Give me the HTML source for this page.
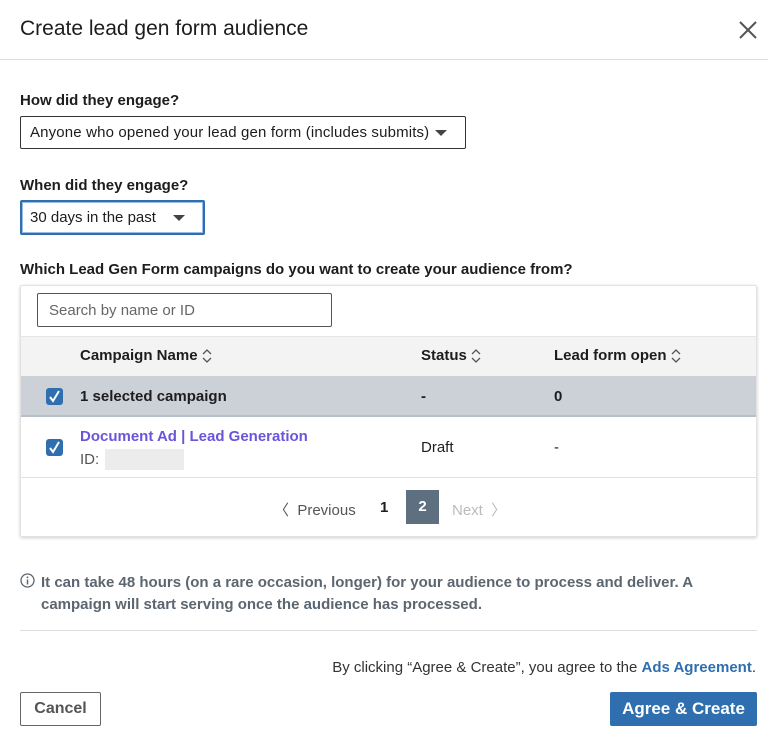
<!DOCTYPE html>
<html><head><meta charset="utf-8"><style>
*{margin:0;padding:0;box-sizing:border-box}
body{width:768px;height:735px;background:#fff;font-family:"Liberation Sans",sans-serif;color:#1d1d1d;position:relative;overflow:hidden;font-size:15px}
.a{position:absolute;white-space:nowrap}
.b{font-weight:bold}
.sel{position:absolute;border:1px solid #333;border-radius:2px;padding-left:9px;display:flex;align-items:center}
.tri{width:0;height:0;border-left:6px solid transparent;border-right:6px solid transparent;border-top:6px solid #444;position:absolute}
.cb{position:absolute;width:17px;height:17px;background:#2f6fb0;border-radius:3px}
.cb svg{position:absolute;left:2px;top:2px}
.sort{display:inline-block;vertical-align:middle;margin-left:4px}
</style></head><body>
<div class="a" style="left:20px;top:17px;font-size:21px">Create lead gen form audience</div>
<svg class="a" style="left:739px;top:21px" width="18" height="18"><path d="M1 1L17 17M17 1L1 17" stroke="#555" stroke-width="2"/></svg>
<div class="a" style="left:0;top:59px;width:768px;height:1px;background:#ddd"></div>

<div class="a b" style="left:20px;top:92px">How did they engage?</div>
<div class="sel" style="left:20px;top:116px;width:446px;height:33px;letter-spacing:0.15px">Anyone who opened your lead gen form (includes submits)<div class="tri" style="left:414px;top:13px"></div></div>

<div class="a b" style="left:20px;top:177px">When did they engage?</div>
<div class="sel" style="left:20px;top:200px;width:185px;height:35px;border:2px solid #2f6fb0;box-shadow:0 0 0 1px #9bbbe0 inset;padding-left:8px">30 days in the past<div class="tri" style="left:151px;top:13px"></div></div>

<div class="a b" style="left:20px;top:261px">Which Lead Gen Form campaigns do you want to create your audience from?</div>

<div class="a" style="left:20px;top:285px;width:737px;height:252px;border:1px solid #e2e2e2;box-shadow:0 1px 3px rgba(0,0,0,.2);border-radius:2px;overflow:hidden">
 <div class="a" style="left:16px;top:7px;width:295px;height:34px;border:1px solid #555;border-radius:2px;padding:8px 11px;color:#666">Search by name or ID</div>
 <div class="a" style="left:0;top:50px;width:737px;height:40px;background:#f3f3f4;border-top:1px solid #e6e6e6"></div>
 <div class="a b" style="left:59px;top:61px">Campaign Name<svg class="sort" width="10" height="14"><path d="M1 5L5 1L9 5M1 9L5 13L9 9" stroke="#555" fill="none" stroke-width="1.3"/></svg></div>
 <div class="a b" style="left:400px;top:61px">Status<svg class="sort" width="10" height="14"><path d="M1 5L5 1L9 5M1 9L5 13L9 9" stroke="#555" fill="none" stroke-width="1.3"/></svg></div>
 <div class="a b" style="left:533px;top:61px">Lead form open<svg class="sort" width="10" height="14"><path d="M1 5L5 1L9 5M1 9L5 13L9 9" stroke="#555" fill="none" stroke-width="1.3"/></svg></div>
 <div class="a" style="left:0;top:90px;width:737px;height:41px;background:#ccd1d8;border-bottom:2px solid #b8bfc7"></div>
 <div class="cb" style="left:25px;top:102px"><svg width="13" height="13"><path d="M2 7L5 11L11 1" stroke="#fff" stroke-width="2" fill="none"/></svg></div>
 <div class="a b" style="left:59px;top:102px">1 selected campaign</div>
 <div class="a b" style="left:400px;top:102px">-</div>
 <div class="a b" style="left:533px;top:102px">0</div>
 <div class="cb" style="left:25px;top:153px"><svg width="13" height="13"><path d="M2 7L5 11L11 1" stroke="#fff" stroke-width="2" fill="none"/></svg></div>
 <div class="a b" style="left:59px;top:142px;color:#6a55d9">Document Ad | Lead Generation</div>
 <div class="a" style="left:59px;top:165px;color:#555">ID:</div>
 <div class="a" style="left:84px;top:163px;width:79px;height:21px;background:#ececec"></div>
 <div class="a" style="left:400px;top:153px">Draft</div>
 <div class="a" style="left:533px;top:153px">-</div>
 <div class="a" style="left:0;top:191px;width:737px;height:1px;background:#e2e2e2"></div>
 <div class="a" style="left:253px;top:213px;color:#555">〈&nbsp; Previous</div>
 <div class="a b" style="left:359px;top:213px">1</div>
 <div class="a b" style="left:385px;top:204px;width:33px;height:34px;background:#5e6f80;color:#fff;text-align:center;line-height:34px">2</div>
 <div class="a" style="left:431px;top:213px;color:#bbb">Next &nbsp;〉</div>
</div>

<svg class="a" style="left:20px;top:573px" width="15" height="15"><circle cx="7.5" cy="7.5" r="6.5" stroke="#5b6670" fill="none" stroke-width="1.3"/><path d="M7.5 6.5V11.5" stroke="#5b6670" stroke-width="1.5"/><circle cx="7.5" cy="4.3" r="0.9" fill="#5b6670"/></svg>
<div class="a b" style="left:41px;top:572px;color:#5b6670;line-height:22px">It can take 48 hours (on a rare occasion, longer) for your audience to process and deliver. A<br>campaign will start serving once the audience has processed.</div>
<div class="a" style="left:20px;top:630px;width:737px;height:1px;background:#ddd"></div>
<div class="a" style="right:12px;top:659px;color:#333">By clicking “Agree &amp; Create”, you agree to the <span class="b" style="color:#2f6fb0">Ads Agreement</span>.</div>
<div class="a b" style="left:20px;top:692px;width:81px;height:34px;border:1px solid #666;border-radius:2px;text-align:center;line-height:32px;color:#555;font-size:16px">Cancel</div>
<div class="a b" style="left:610px;top:692px;width:147px;height:34px;background:#2f6fb0;border-radius:2px;text-align:center;line-height:34px;color:#fff;font-size:17px">Agree &amp; Create</div>
</body></html>
